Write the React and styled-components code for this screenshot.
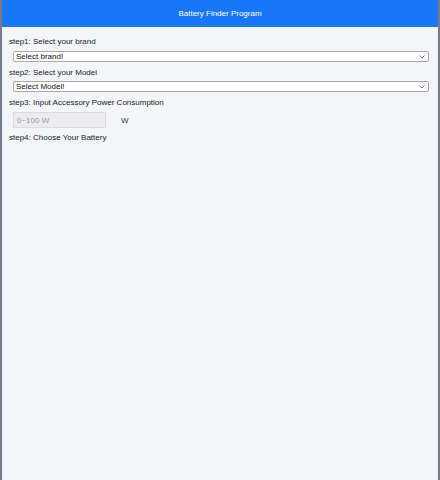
import React from 'react';
import styled, { createGlobalStyle } from 'styled-components';

const GlobalStyle = createGlobalStyle`
  html, body {
    margin: 0;
    padding: 0;
    background: #f4f5f9;
  }
  * {
    box-sizing: border-box;
  }
`;

const Frame = styled.div`
  width: 440px;
  height: 480px;
  background: #f4f5f9;
  border-left: 2px solid #7a7a84;
  border-right: 2px solid #7a7a84;
  font-family: 'Liberation Sans', Arial, sans-serif;
  color: #222;
  display: flex;
  flex-direction: column;
`;

const Header = styled.header`
  height: 27px;
  background: #1877f6;
  color: #fff;
  font-size: 8px;
  display: flex;
  align-items: center;
  justify-content: center;
`;

const Body = styled.main`
  padding: 9px 9px 0 7px;
  display: flex;
  flex-direction: column;
`;

const Label = styled.div`
  font-size: 8px;
  line-height: 11px;
  margin-bottom: ${(p) => p.$gap ?? 4}px;
`;

const SelectBox = styled.div`
  margin: 0 0 5px 4px;
  height: 11px;
  background: #fff;
  border: 1px solid #a9a9ad;
  border-radius: 2px;
  display: flex;
  align-items: center;
  justify-content: space-between;
  padding: 0 3px 0 2px;
  font-size: 8px;
  color: #111;
`;

const Chevron = styled.svg`
  width: 6px;
  height: 4px;
`;

const InputRow = styled.div`
  display: flex;
  align-items: center;
  gap: 15px;
  margin: 0 0 4px 4px;
`;

const Input = styled.div`
  width: 93px;
  height: 16px;
  background: #ececee;
  border: 1px solid #dcdce0;
  display: flex;
  align-items: center;
  padding-left: 3px;
  font-size: 8px;
  color: #9a9aa0;
`;

const Unit = styled.span`
  font-size: 8px;
  color: #333;
`;

const Select = ({ text }) => (
  <SelectBox>
    <span>{text}</span>
    <Chevron viewBox="0 0 6 4">
      <path d="M0.5 0.5 L3 3 L5.5 0.5" fill="none" stroke="#777" strokeWidth="0.9" />
    </Chevron>
  </SelectBox>
);

export default function App() {
  return (
    <>
      <GlobalStyle />
      <Frame>
        <Header>Battery Finder Program</Header>
        <Body>
          <Label>step1: Select your brand</Label>
          <Select text="Select brand!" />
          <Label $gap={3}>step2: Select your Model</Label>
          <Select text="Select Model!" />
          <Label>step3: Input Accessory Power Consumption</Label>
          <InputRow>
            <Input>0~100 W</Input>
            <Unit>W</Unit>
          </InputRow>
          <Label>step4: Choose Your Battery</Label>
        </Body>
      </Frame>
    </>
  );
}
